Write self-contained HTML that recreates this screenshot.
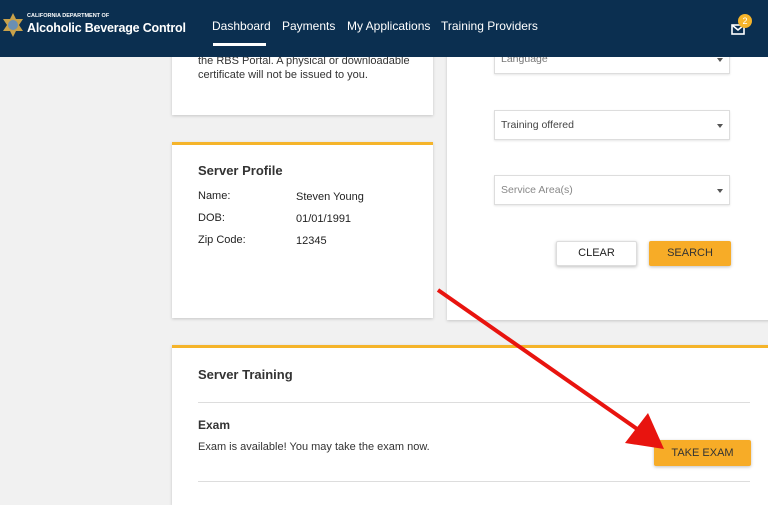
<!DOCTYPE html>
<html><head><style>
*{box-sizing:border-box;margin:0;padding:0}
body{width:768px;height:486px;overflow:hidden;background:#f1f1f1;font-family:"Liberation Sans",sans-serif;position:relative;color:#222}
.nav{position:absolute;left:0;top:0;width:768px;height:57px;background:#0b2f50;color:#fff;z-index:2}
.card{position:absolute;background:#fff;box-shadow:0 1px 3px rgba(0,0,0,.18)}
.t{position:absolute;white-space:nowrap}
.sel{position:absolute;left:494px;width:236px;height:30px;background:#fff;border:1px solid #ddd;box-shadow:0 1px 2px rgba(0,0,0,.1);font-size:10.5px;color:#444;padding:8px 6px}
.sel:after{content:"";position:absolute;right:6px;top:13px;border:3px solid transparent;border-top:4px solid #555}
.btn{position:absolute;font-size:11px;text-align:center;border-radius:2px;box-shadow:0 1px 3px rgba(0,0,0,.25)}
</style></head><body>
<div class="card" style="left:172px;top:40px;width:261px;height:75px"></div>
<div class="t" style="left:198px;top:55px;font-size:11px;color:#333">the RBS Portal. A physical or downloadable</div>
<div class="t" style="left:198px;top:69px;font-size:11px;color:#333">certificate will not be issued to you.</div>
<div class="card" style="left:172px;top:142px;width:261px;height:176px;border-top:3px solid #f5b42a"></div>
<div class="t" style="left:198px;top:163px;font-size:13px;font-weight:bold;color:#333">Server Profile</div>
<div class="t" style="left:198px;top:190px;font-size:11px">Name:</div>
<div class="t" style="left:296px;top:191px;font-size:11px">Steven Young</div>
<div class="t" style="left:198px;top:212px;font-size:11px">DOB:</div>
<div class="t" style="left:296px;top:213px;font-size:11px">01/01/1991</div>
<div class="t" style="left:198px;top:234px;font-size:11px">Zip Code:</div>
<div class="t" style="left:296px;top:235px;font-size:11px">12345</div>
<div class="card" style="left:447px;top:40px;width:330px;height:280px"></div>
<div class="sel" style="top:44px;color:#777">Language</div>
<div class="sel" style="top:110px">Training offered</div>
<div class="sel" style="top:175px;color:#888">Service Area(s)</div>
<div class="nav">
<svg style="position:absolute;left:2px;top:13px" width="22" height="24" viewBox="0 0 22 24"><polygon points="11,0 14,6 21,6 17,12 21,18 14,18 11,24 8,18 1,18 5,12 1,6 8,6" fill="#c9a24a"/><circle cx="11" cy="12" r="5" fill="#6a8fb5"/></svg>
<div class="t" style="left:27px;top:13px;font-size:5.5px;font-weight:bold">CALIFORNIA DEPARTMENT OF</div>
<div class="t" style="left:27px;top:21px;font-size:12.5px;font-weight:bold;letter-spacing:-0.2px">Alcoholic Beverage Control</div>
<div class="t" style="left:212px;top:19px;font-size:12px">Dashboard</div>
<div style="position:absolute;left:213px;top:43px;width:53px;height:3px;background:#fff"></div>
<div class="t" style="left:282px;top:19px;font-size:12px">Payments</div>
<div class="t" style="left:347px;top:19px;font-size:12px">My Applications</div>
<div class="t" style="left:441px;top:19px;font-size:12px">Training Providers</div>
<svg style="position:absolute;left:731px;top:24px" width="14" height="11" viewBox="0 0 14 11"><rect x="1" y="1" width="12" height="9" fill="none" stroke="#fff" stroke-width="1.6"/><path d="M1 1 L7 6 L13 1" fill="none" stroke="#fff" stroke-width="1.6"/></svg>
<div style="position:absolute;left:738px;top:14px;width:14px;height:14px;border-radius:50%;background:#f5b42a;color:#fff;font-size:9px;text-align:center;line-height:14px">2</div>
</div>
<div class="btn" style="left:556px;top:241px;width:81px;height:25px;background:#fff;border:1px solid #ddd;line-height:23px">CLEAR</div>
<div class="btn" style="left:649px;top:241px;width:82px;height:25px;background:#f7ac27;line-height:25px;color:#333">SEARCH</div>
<div class="card" style="left:172px;top:345px;width:610px;height:160px;border-top:3px solid #f5b42a"></div>
<div class="t" style="left:198px;top:367px;font-size:13px;font-weight:bold;color:#333">Server Training</div>
<div style="position:absolute;left:198px;top:402px;width:552px;height:1px;background:#ddd"></div>
<div class="t" style="left:198px;top:418px;font-size:12px;font-weight:bold;color:#333">Exam</div>
<div class="t" style="left:198px;top:441px;font-size:11px;color:#333">Exam is available! You may take the exam now.</div>
<div style="position:absolute;left:198px;top:481px;width:552px;height:1px;background:#ddd"></div>
<div class="btn" style="left:654px;top:440px;width:97px;height:26px;background:#f7ac27;line-height:26px;color:#333">TAKE EXAM</div>
<svg style="position:absolute;left:0;top:0;z-index:3" width="768" height="486"><line x1="438" y1="290" x2="640" y2="431" stroke="#e8140f" stroke-width="4"/><polygon points="664,449 625,443 648,413" fill="#e8140f"/></svg>
</body></html>
